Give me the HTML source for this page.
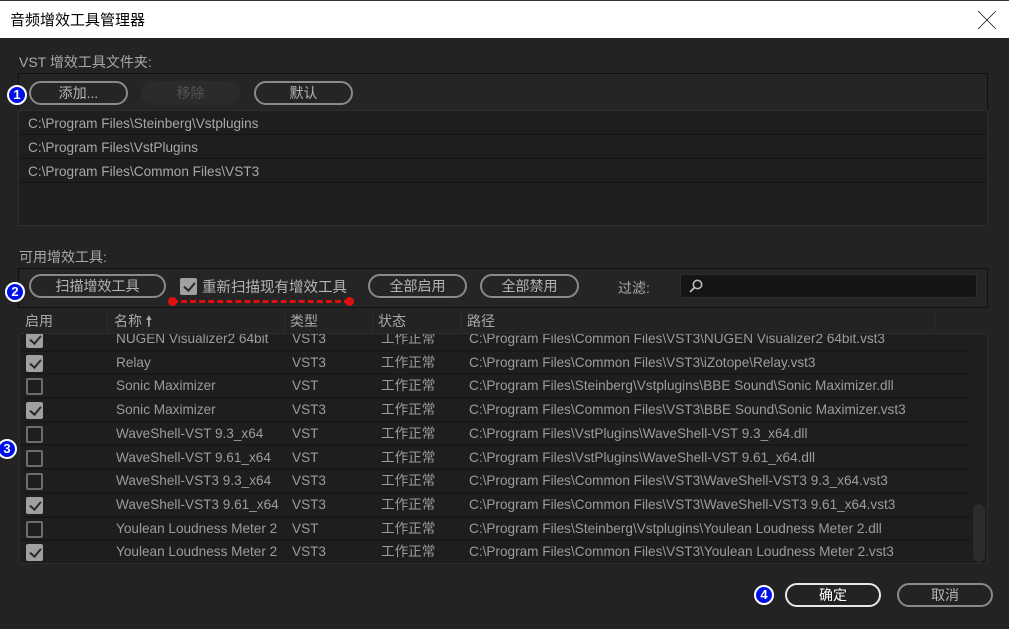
<!DOCTYPE html>
<html><head><meta charset="utf-8"><style>
*{box-sizing:border-box;margin:0;padding:0}
body{width:1009px;height:629px;background:#232323;font-family:"Liberation Sans","Noto Sans CJK SC",sans-serif;color:#a8a8a8;font-size:13.5px;position:relative;overflow:hidden}
.a{position:absolute;white-space:nowrap}
.title{left:0;top:0;width:1009px;height:38px;background:#fff;border-top:1px solid #333;color:#000;font-size:15px}
.btn{position:absolute;height:24px;border:2px solid #8a8a8a;border-radius:12px;text-align:center;line-height:20px;color:#b5b5b5;font-size:14px}
.num{position:absolute;width:20px;height:20px;border-radius:50%;background:#0010e8;border:2px solid #fff;color:#fff;font-size:13px;font-weight:bold;text-align:center;line-height:16px}
.cb{position:absolute;width:17px;height:17px;border:2px solid #6d6d6d;border-radius:2px}
.cb.on{background:#a0a0a0;border-color:#a0a0a0}
.cb.on:after{content:"";position:absolute;left:4px;top:0px;width:5px;height:9px;border:solid #2a2a2a;border-width:0 2px 2px 0;transform:rotate(40deg)}
.row{position:absolute;left:0;width:950px;height:23.7px;border-bottom:2px solid #181818;line-height:22px;font-size:13.6px;color:#9c9c9c}
.row span{position:absolute}
</style></head><body>
<div class="a title"><span class="a" style="left:10px;top:8px">音频增效工具管理器</span><span class="a" style="left:978px;top:6px;font-size:18px;font-weight:300">╳</span></div>

<div class="a" style="left:19px;top:52px;font-size:14px">VST 增效工具文件夹:</div>
<div class="a" style="left:18px;top:73px;width:970px;height:38px;border:1px solid #111;background:#252525"></div>
<div class="a" style="left:18px;top:110px;width:970px;height:116px;border:1px solid #2e2e2e;background:#1e1e1e"></div>
<div class="a" style="left:19px;top:112px;width:967px;height:23px;border-bottom:1px solid #151515;padding-left:9px;line-height:24px;font-size:13.6px">C:\Program Files\Steinberg\Vstplugins</div>
<div class="a" style="left:19px;top:136px;width:967px;height:23px;border-bottom:1px solid #151515;padding-left:9px;line-height:24px;font-size:13.6px">C:\Program Files\VstPlugins</div>
<div class="a" style="left:19px;top:160px;width:967px;height:23px;border-bottom:1px solid #151515;padding-left:9px;line-height:24px;font-size:13.6px">C:\Program Files\Common Files\VST3</div>
<div class="btn" style="left:29px;top:81px;width:99px">添加...</div>
<div class="btn" style="left:141px;top:81px;width:99px;border-color:#2b2b2b;background:#2b2b2b;color:#555">移除</div>
<div class="btn" style="left:254px;top:81px;width:99px">默认</div>
<div class="num" style="left:7px;top:85px">1</div>

<div class="a" style="left:19px;top:247px;font-size:14px">可用增效工具:</div>
<div class="a" style="left:18px;top:268px;width:970px;height:40px;border:1px solid #111;background:#252525"></div>
<div class="btn" style="left:29px;top:274px;width:137px">扫描增效工具</div>
<div class="cb on" style="left:180px;top:278px"></div>
<div class="a" style="left:202px;top:276px;font-size:14.5px;color:#b5b5b5">重新扫描现有增效工具</div>
<div class="a" style="left:172px;top:300px;width:178px;border-top:3px dashed #e01010"></div>
<div class="a" style="left:168px;top:297px;width:9px;height:9px;border-radius:50%;background:#e01010"></div>
<div class="a" style="left:345px;top:297px;width:9px;height:9px;border-radius:50%;background:#e01010"></div>
<div class="btn" style="left:368px;top:274px;width:99px">全部启用</div>
<div class="btn" style="left:480px;top:274px;width:99px">全部禁用</div>
<div class="a" style="left:618px;top:278px;font-size:14px">过滤:</div>
<div class="a" style="left:680px;top:274px;width:297px;height:24px;background:#141414;border:1px solid #2e2e2e;border-radius:3px"><svg width="16" height="16" style="position:absolute;left:7px;top:3px"><circle cx="9.5" cy="6.5" r="4.2" fill="none" stroke="#bbb" stroke-width="1.6"/><line x1="6.5" y1="9.5" x2="2" y2="14" stroke="#bbb" stroke-width="1.8"/></svg></div>
<div class="num" style="left:5px;top:282px">2</div>

<div class="a" style="left:25px;top:311px;font-size:14px">启用</div>
<div class="a" style="left:107px;top:311px;height:20px;border-left:1px solid #2e2e2e"></div>
<div class="a" style="left:114px;top:311px;font-size:14px">名称 <b>🠕</b></div>
<div class="a" style="left:284px;top:311px;height:20px;border-left:1px solid #2e2e2e"></div>
<div class="a" style="left:290px;top:311px;font-size:14px">类型</div>
<div class="a" style="left:372px;top:311px;height:20px;border-left:1px solid #2e2e2e"></div>
<div class="a" style="left:378px;top:311px;font-size:14px">状态</div>
<div class="a" style="left:461px;top:311px;height:20px;border-left:1px solid #2e2e2e"></div>
<div class="a" style="left:467px;top:311px;font-size:14px">路径</div>
<div class="a" style="left:934px;top:311px;height:20px;border-left:1px solid #2e2e2e"></div>

<div class="a" style="left:19px;top:333px;width:969px;height:231px;border:1px solid #2e2e2e;border-radius:3px;background:#1e1e1e;overflow:hidden">
<div style="position:absolute;left:0;top:-6px">
<div class="row" style="top:0"><i class="cb on" style="left:6px;top:3px"></i><span style="left:96px">NUGEN Visualizer2 64bit</span><span style="left:272px">VST3</span><span style="left:361px">工作正常</span><span style="left:449px">C:\Program Files\Common Files\VST3\NUGEN Visualizer2 64bit.vst3</span></div>
<div class="row" style="top:23.7px"><i class="cb on" style="left:6px;top:3px"></i><span style="left:96px">Relay</span><span style="left:272px">VST3</span><span style="left:361px">工作正常</span><span style="left:449px">C:\Program Files\Common Files\VST3\iZotope\Relay.vst3</span></div>
<div class="row" style="top:47.4px"><i class="cb" style="left:6px;top:3px"></i><span style="left:96px">Sonic Maximizer</span><span style="left:272px">VST</span><span style="left:361px">工作正常</span><span style="left:449px">C:\Program Files\Steinberg\Vstplugins\BBE Sound\Sonic Maximizer.dll</span></div>
<div class="row" style="top:71.1px"><i class="cb on" style="left:6px;top:3px"></i><span style="left:96px">Sonic Maximizer</span><span style="left:272px">VST3</span><span style="left:361px">工作正常</span><span style="left:449px">C:\Program Files\Common Files\VST3\BBE Sound\Sonic Maximizer.vst3</span></div>
<div class="row" style="top:94.8px"><i class="cb" style="left:6px;top:3px"></i><span style="left:96px">WaveShell-VST 9.3_x64</span><span style="left:272px">VST</span><span style="left:361px">工作正常</span><span style="left:449px">C:\Program Files\VstPlugins\WaveShell-VST 9.3_x64.dll</span></div>
<div class="row" style="top:118.5px"><i class="cb" style="left:6px;top:3px"></i><span style="left:96px">WaveShell-VST 9.61_x64</span><span style="left:272px">VST</span><span style="left:361px">工作正常</span><span style="left:449px">C:\Program Files\VstPlugins\WaveShell-VST 9.61_x64.dll</span></div>
<div class="row" style="top:142.2px"><i class="cb" style="left:6px;top:3px"></i><span style="left:96px">WaveShell-VST3 9.3_x64</span><span style="left:272px">VST3</span><span style="left:361px">工作正常</span><span style="left:449px">C:\Program Files\Common Files\VST3\WaveShell-VST3 9.3_x64.vst3</span></div>
<div class="row" style="top:165.9px"><i class="cb on" style="left:6px;top:3px"></i><span style="left:96px">WaveShell-VST3 9.61_x64</span><span style="left:272px">VST3</span><span style="left:361px">工作正常</span><span style="left:449px">C:\Program Files\Common Files\VST3\WaveShell-VST3 9.61_x64.vst3</span></div>
<div class="row" style="top:189.6px"><i class="cb" style="left:6px;top:3px"></i><span style="left:96px">Youlean Loudness Meter 2</span><span style="left:272px">VST</span><span style="left:361px">工作正常</span><span style="left:449px">C:\Program Files\Steinberg\Vstplugins\Youlean Loudness Meter 2.dll</span></div>
<div class="row" style="top:213.3px;border-bottom:none"><i class="cb on" style="left:6px;top:3px"></i><span style="left:96px">Youlean Loudness Meter 2</span><span style="left:272px">VST3</span><span style="left:361px">工作正常</span><span style="left:449px">C:\Program Files\Common Files\VST3\Youlean Loudness Meter 2.vst3</span></div>
</div>
<div style="position:absolute;left:953px;top:170px;width:12px;height:58px;border-radius:6px;background:#2c2c2c"></div>
</div>
<div class="num" style="left:-3px;top:439px">3</div>

<div class="num" style="left:754px;top:585px">4</div>
<div class="btn" style="left:785px;top:583px;width:96px;border-color:#e8e8e8;color:#fff">确定</div>
<div class="btn" style="left:897px;top:583px;width:96px">取消</div>
</body></html>
